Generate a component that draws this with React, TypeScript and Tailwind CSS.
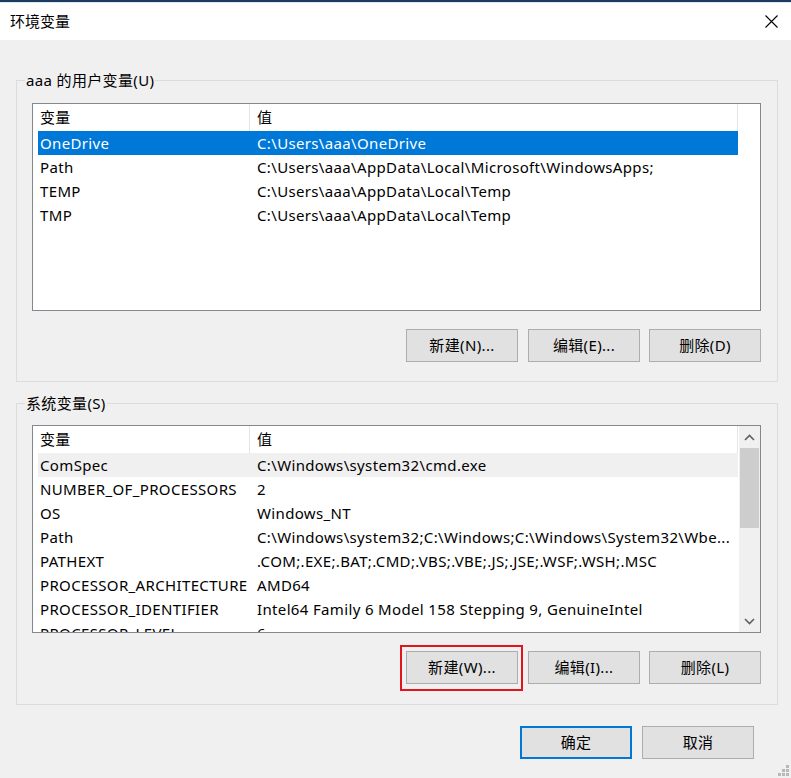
import React from "react";

const FONT = "font-['Noto_Sans','Noto_Sans_CJK_SC',sans-serif]";

type Row = [string, string];

const userRows: Row[] = [
  ["OneDrive", "C:\\Users\\aaa\\OneDrive"],
  ["Path", "C:\\Users\\aaa\\AppData\\Local\\Microsoft\\WindowsApps;"],
  ["TEMP", "C:\\Users\\aaa\\AppData\\Local\\Temp"],
  ["TMP", "C:\\Users\\aaa\\AppData\\Local\\Temp"],
];

const sysRows: Row[] = [
  ["ComSpec", "C:\\Windows\\system32\\cmd.exe"],
  ["NUMBER_OF_PROCESSORS", "2"],
  ["OS", "Windows_NT"],
  ["Path", "C:\\Windows\\system32;C:\\Windows;C:\\Windows\\System32\\Wbe..."],
  ["PATHEXT", ".COM;.EXE;.BAT;.CMD;.VBS;.VBE;.JS;.JSE;.WSF;.WSH;.MSC"],
  ["PROCESSOR_ARCHITECTURE", "AMD64"],
  ["PROCESSOR_IDENTIFIER", "Intel64 Family 6 Model 158 Stepping 9, GenuineIntel"],
  ["PROCESSOR_LEVEL", "6"],
];

function Header() {
  return (
    <div className="flex h-[27px] shrink-0 items-center pl-[5px]">
      <div className="flex h-full w-[212px] items-center border-r border-[#e5e5e5] pl-[2px]">变量</div>
      <div className="flex h-full w-[488px] items-center border-r border-[#e5e5e5] pl-[7px]">值</div>
    </div>
  );
}

function ListRow({ row, kind }: { row: Row; kind: "sel" | "hover" | "none" }) {
  const bg =
    kind === "sel" ? "bg-[#0078d7] text-white" : kind === "hover" ? "bg-[#f0f0f0]" : "";
  return (
    <div className="pl-[5px]">
      <div className={`flex h-[24px] w-[700px] shrink-0 items-center whitespace-nowrap ${bg}`}>
        <div className="w-[212px] shrink-0 overflow-hidden pl-[2px]">{row[0]}</div>
        <div className="w-[488px] shrink-0 overflow-hidden pl-[7px]">{row[1]}</div>
      </div>
    </div>
  );
}

function Btn({ children, primary }: { children: React.ReactNode; primary?: boolean }) {
  return (
    <div
      className={`flex h-[33px] w-[112px] items-center justify-center bg-[#e1e1e1] ${
        primary ? "border-2 border-[#0078d7]" : "border border-[#adadad]"
      }`}
    >
      {children}
    </div>
  );
}

function Group({ label, children }: { label: string; children: React.ReactNode }) {
  return (
    <div className="relative w-[762px] border border-[#dcdcdc] px-[15px]">
      <span className="absolute left-[8px] top-[-12px] bg-[#f0f0f0] px-[1px] leading-[22px]">{label}</span>
      {children}
    </div>
  );
}

function ScrollBar() {
  return (
    <div className="flex w-[21px] shrink-0 flex-col bg-[#f0f0f0]">
      <div className="flex h-[22px] items-center justify-center">
        <svg width="11" height="7" viewBox="0 0 11 7">
          <path d="M1 6 L5.5 1.5 L10 6" fill="none" stroke="#606060" strokeWidth="1.6" />
        </svg>
      </div>
      <div className="mx-[1px] h-[80px] bg-[#cdcdcd]" />
      <div className="flex-1" />
      <div className="flex h-[22px] items-center justify-center">
        <svg width="11" height="7" viewBox="0 0 11 7">
          <path d="M1 1 L5.5 5.5 L10 1" fill="none" stroke="#606060" strokeWidth="1.6" />
        </svg>
      </div>
    </div>
  );
}

export default function App() {
  return (
    <div
      className={`flex h-[778px] w-[791px] flex-col overflow-hidden bg-[#f0f0f0] text-[15px] tracking-[0.35px] text-black ${FONT}`}
    >
      <div className="h-[2px] shrink-0 bg-[#1b3c5e]" />
      <div className="h-[1px] shrink-0 bg-[#dbe9f5]" />
      <div className="flex h-[37px] shrink-0 items-center justify-between bg-white pl-[10px] pr-[13px]">
        <span className="tracking-normal">环境变量</span>
        <svg width="13" height="13" viewBox="0 0 13 13">
          <path d="M0.5 0.5 L12.5 12.5 M12.5 0.5 L0.5 12.5" stroke="#000" strokeWidth="1.1" />
        </svg>
      </div>

      <div className="flex flex-col px-[16px] pt-[40px]">
        <Group label="aaa 的用户变量(U)">
          <div className="mt-[22px] flex h-[208px] w-[729px] flex-col border border-[#828790] bg-white">
            <Header />
            <ListRow row={userRows[0]} kind="sel" />
            {userRows.slice(1).map((r) => (
              <ListRow key={r[0]} row={r} kind="none" />
            ))}
          </div>
          <div className="mb-[19px] mt-[18px] flex w-[729px] justify-end gap-[9px]">
            <div className="mr-[1px]">
              <Btn>新建(N)...</Btn>
            </div>
            <Btn>编辑(E)...</Btn>
            <Btn>删除(D)</Btn>
          </div>
        </Group>

        <div className="h-[21px]" />

        <Group label="系统变量(S)">
          <div className="mt-[21px] flex h-[208px] w-[729px] border border-[#828790] bg-white">
            <div className="flex w-[706px] flex-col overflow-hidden">
              <Header />
              {sysRows.map((r, i) => (
                <ListRow key={r[0]} row={r} kind={i === 0 ? "hover" : "none"} />
              ))}
            </div>
            <ScrollBar />
          </div>
          <div className="mb-[20px] mt-[18px] flex w-[729px] justify-end gap-[9px]">
            <div className="relative mr-[1px]">
              <Btn>新建(W)...</Btn>
              <span className="absolute -bottom-[7px] -left-[6px] -right-[5px] -top-[6px] border-2 border-[#e0161d]" />
            </div>
            <Btn>编辑(I)...</Btn>
            <Btn>删除(L)</Btn>
          </div>
        </Group>

        <div className="mt-[21px] flex justify-end gap-[10px] pr-[21px]">
          <Btn primary>确定</Btn>
          <Btn>取消</Btn>
        </div>
      </div>

      <div className="relative flex-1">
        <svg className="absolute bottom-[2px] right-[2px]" width="11" height="11" viewBox="0 0 11 11">
          <rect x="8" y="0" width="3" height="3" fill="#b8b8b8" />
          <rect x="4" y="4" width="3" height="3" fill="#b8b8b8" />
          <rect x="8" y="4" width="3" height="3" fill="#b8b8b8" />
          <rect x="0" y="8" width="3" height="3" fill="#b8b8b8" />
          <rect x="4" y="8" width="3" height="3" fill="#b8b8b8" />
          <rect x="8" y="8" width="3" height="3" fill="#b8b8b8" />
        </svg>
      </div>
    </div>
  );
}
